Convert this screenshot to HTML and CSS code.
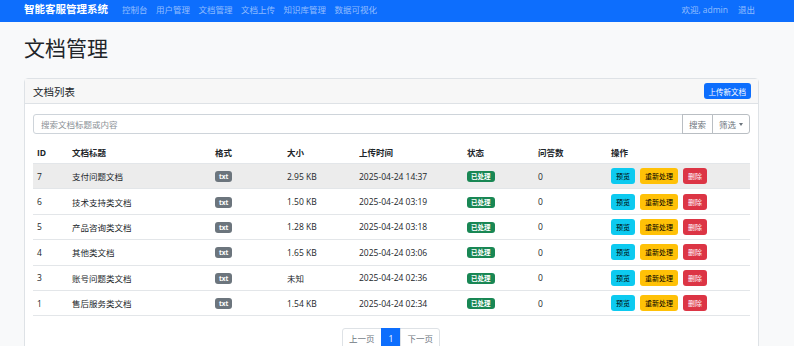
FILE: index.html
```html
<!DOCTYPE html>
<html>
<head>
    <title>文档管理 - 智能客服管理系统</title>
    <link rel="stylesheet" href="styles.css">
</head>
<body>
    <nav class="navbar">
        <div class="nav-inner">
            <span class="brand">智能客服管理系统</span>
            <div class="nav-links">
                <a href="#">控制台</a>
                <a href="#">用户管理</a>
                <a href="#">文档管理</a>
                <a href="#">文档上传</a>
                <a href="#">知识库管理</a>
                <a href="#">数据可视化</a>
            </div>
            <div class="nav-right">
                <span>欢迎, admin</span>
                <a href="#">退出</a>
            </div>
        </div>
    </nav>

    <div class="container">
        <h1>文档管理</h1>

        <div class="card">
            <div class="card-header">
                <span>文档列表</span>
                <button class="btn-upload">上传新文档</button>
            </div>
            <div class="card-body">
                <div class="input-group">
                    <input type="text" placeholder="搜索文档标题或内容">
                    <button class="btn-outline">搜索</button>
                    <button class="btn-outline">筛选<span class="caret"></span></button>
                </div>

                <table>
                    <colgroup>
                        <col style="width: 35px">
                        <col style="width: 143px">
                        <col style="width: 72px">
                        <col style="width: 72px">
                        <col style="width: 108px">
                        <col style="width: 71px">
                        <col style="width: 73px">
                        <col style="width: 143px">
                    </colgroup>
                    <tr>
                        <th>ID</th><th>文档标题</th><th>格式</th><th>大小</th><th>上传时间</th><th>状态</th><th>问答数</th><th>操作</th>
                    </tr>
                    <tr class="hover">
                        <td>7</td><td>支付问题文档</td><td><span class="badge gray">txt</span></td><td>2.95 KB</td><td>2025-04-24 14:37</td><td><span class="badge green">已处理</span></td><td>0</td>
                        <td><div class="ops"><button class="op cyan">预览</button><button class="op yellow">重新处理</button><button class="op red">删除</button></div></td>
                    </tr>
                    <tr>
                        <td>6</td><td>技术支持类文档</td><td><span class="badge gray">txt</span></td><td>1.50 KB</td><td>2025-04-24 03:19</td><td><span class="badge green">已处理</span></td><td>0</td>
                        <td><div class="ops"><button class="op cyan">预览</button><button class="op yellow">重新处理</button><button class="op red">删除</button></div></td>
                    </tr>
                    <tr>
                        <td>5</td><td>产品咨询类文档</td><td><span class="badge gray">txt</span></td><td>1.28 KB</td><td>2025-04-24 03:18</td><td><span class="badge green">已处理</span></td><td>0</td>
                        <td><div class="ops"><button class="op cyan">预览</button><button class="op yellow">重新处理</button><button class="op red">删除</button></div></td>
                    </tr>
                    <tr>
                        <td>4</td><td>其他类文档</td><td><span class="badge gray">txt</span></td><td>1.65 KB</td><td>2025-04-24 03:06</td><td><span class="badge green">已处理</span></td><td>0</td>
                        <td><div class="ops"><button class="op cyan">预览</button><button class="op yellow">重新处理</button><button class="op red">删除</button></div></td>
                    </tr>
                    <tr>
                        <td>3</td><td>账号问题类文档</td><td><span class="badge gray">txt</span></td><td>未知</td><td>2025-04-24 02:36</td><td><span class="badge green">已处理</span></td><td>0</td>
                        <td><div class="ops"><button class="op cyan">预览</button><button class="op yellow">重新处理</button><button class="op red">删除</button></div></td>
                    </tr>
                    <tr>
                        <td>1</td><td>售后服务类文档</td><td><span class="badge gray">txt</span></td><td>1.54 KB</td><td>2025-04-24 02:34</td><td><span class="badge green">已处理</span></td><td>0</td>
                        <td><div class="ops"><button class="op cyan">预览</button><button class="op yellow">重新处理</button><button class="op red">删除</button></div></td>
                    </tr>
                </table>

                <div class="pagination">
                    <span class="page">上一页</span>
                    <span class="page active">1</span>
                    <span class="page">下一页</span>
                </div>
            </div>
        </div>
    </div>
</body>
</html>
```

FILE: styles.css
```css
body {
    font-family: "Open Sans", "Noto Sans CJK SC", sans-serif;
    background-color: #f8f9fa;
    color: #212529;
    margin: 0;
    font-size: 8.5px;
}
.navbar {
    background-color: #0d6efd;
    height: 22px;
    padding-bottom: 5px;
    box-sizing: border-box;
    display: flex;
    align-items: center;
}
.nav-inner {
    display: flex;
    align-items: center;
    width: 100%;
    padding: 0 39px 0 24px;
}
.brand {
    color: #ffffff;
    font-weight: bold;
    font-size: 10.5px;
    margin-right: 14px;
}
.nav-links {
    display: flex;
    gap: 8.5px;
}
.nav-links a, .nav-right a, .nav-right span {
    color: rgba(255, 255, 255, 0.55);
    text-decoration: none;
    font-size: 8.5px;
}
.nav-right {
    margin-left: auto;
    display: flex;
    gap: 10px;
}
.container {
    padding: 0 35px 0 24px;
}
h1 {
    font-size: 21px;
    font-weight: normal;
    line-height: 25px;
    margin: 14px 0 17px;
}
.card {
    background-color: #ffffff;
    border: 1px solid #dee2e6;
    border-radius: 4px;
}
.card-header {
    background-color: #f7f7f7;
    border-bottom: 1px solid #dee2e6;
    height: 24px;
    padding: 0 7px 0 8px;
    display: flex;
    align-items: center;
    justify-content: space-between;
    font-size: 10.5px;
}
.btn-upload {
    background-color: #0d6efd;
    color: #ffffff;
    border: none;
    border-radius: 3px;
    font-family: inherit;
    font-size: 7.5px;
    height: 16px;
    padding: 0 5px;
}
.card-body {
    padding: 10px 8px 0 8px;
}
.input-group {
    display: flex;
    height: 20px;
    margin-bottom: 7px;
}
.input-group input {
    flex: 1;
    border: 1px solid #ced4da;
    border-radius: 3px 0 0 3px;
    font-family: inherit;
    font-size: 8.5px;
    padding: 0 7px;
    outline: none;
}
.input-group input::placeholder {
    color: #8a9096;
}
.btn-outline {
    background-color: #ffffff;
    border: 1px solid #b9bec3;
    margin-left: -1px;
    color: #6c757d;
    font-family: inherit;
    font-size: 8.5px;
    padding: 0 6px;
    display: flex;
    align-items: center;
}
.btn-outline:last-child {
    border-radius: 0 3px 3px 0;
}
.caret {
    display: inline-block;
    margin-left: 3px;
    border-left: 2.5px solid transparent;
    border-right: 2.5px solid transparent;
    border-top: 3px solid #6c757d;
}
table {
    border-collapse: collapse;
    width: 717px;
    table-layout: fixed;
    font-size: 8.5px;
}
th, td {
    text-align: left;
    padding: 0 4px;
    border-bottom: 1px solid #e3e6e9;
    white-space: nowrap;
}
th {
    font-weight: bold;
    height: 22px;
}
td {
    height: 24.4px;
}
tr.hover td {
    background-color: #ececec;
}
.badge {
    display: inline-block;
    color: #ffffff;
    font-weight: bold;
    font-size: 6.5px;
    line-height: 11px;
    padding: 0 4px;
    border-radius: 3px;
    vertical-align: middle;
}
.gray {
    background-color: #6c757d;
}
.green {
    background-color: #198754;
}
.ops {
    display: flex;
    gap: 5px;
}
.op {
    border: none;
    border-radius: 3px;
    height: 16px;
    padding: 0 5px;
    font-family: inherit;
    font-size: 7px;
}
.cyan {
    background-color: #0dcaf0;
    color: #000000;
}
.yellow {
    background-color: #ffc107;
    color: #000000;
}
.red {
    background-color: #dc3545;
    color: #ffffff;
}
.pagination {
    display: flex;
    justify-content: center;
    margin-top: 12px;
    padding-bottom: 10px;
}
.page {
    border: 1px solid #dee2e6;
    margin-left: -1px;
    height: 20px;
    line-height: 20px;
    padding: 0 6px;
    color: #6c757d;
    background-color: #ffffff;
    font-size: 8.5px;
}
.page:first-child {
    border-radius: 3px 0 0 3px;
}
.page:last-child {
    border-radius: 0 3px 3px 0;
}
.page.active {
    background-color: #0d6efd;
    border-color: #0d6efd;
    color: #ffffff;
    padding: 0 7px;
}
```
